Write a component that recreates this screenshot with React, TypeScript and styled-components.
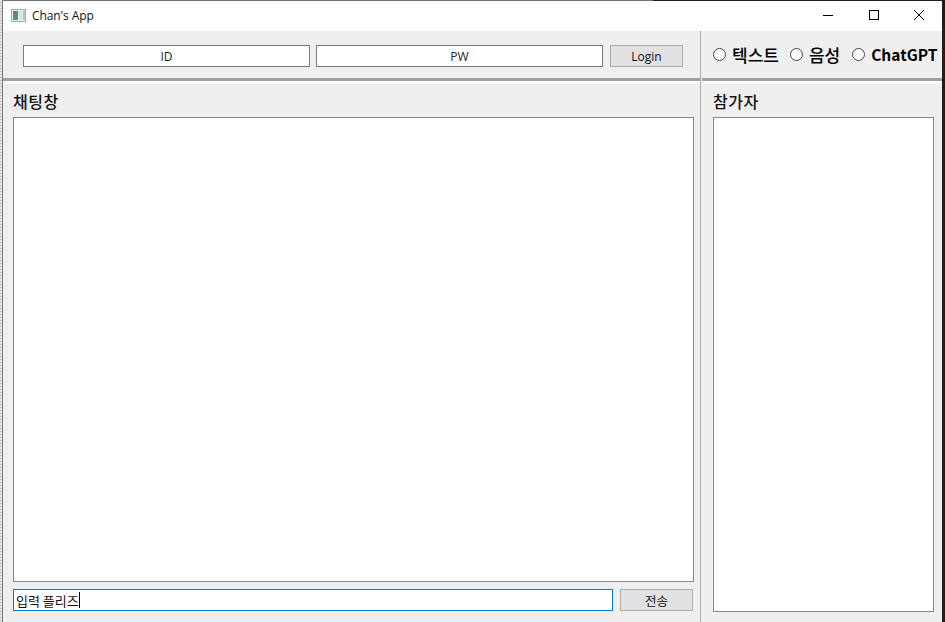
import React from "react";
import styled, { createGlobalStyle } from "styled-components";

const Global = createGlobalStyle`
  html, body { margin: 0; padding: 0; width: 945px; height: 622px; overflow: hidden; background: #f0f0f0; }
  * { box-sizing: border-box; }
`;
const FONT = `"Open Sans", "Liberation Sans", "Noto Sans CJK KR", sans-serif`;
const KFONT = `"Noto Sans CJK KR", "Liberation Sans", sans-serif`;

const Desk = styled.div`
  width: 945px; height: 622px; display: flex; overflow: hidden;
`;
const LeftEdge = styled.div`
  width: 2px; flex: none;
  background: repeating-linear-gradient(180deg, #e6e6e6 0 2px, #c4c4c4 2px 3px);
`;
const RightEdge = styled.div`
  flex: 1; background: #1e1e1e;
`;
const Win = styled.div`
  width: 940px; height: 622px; background: #efefef; display: flex; flex-direction: column; flex: none;
  border-left: 1px solid #777; font-family: ${FONT}; color: #000;
`;
const TopEdge = styled.div`
  height: 1px; flex: none; background: linear-gradient(90deg, #707070 0 650px, #1e1e1e 650px);
`;
const TitleBar = styled.div`
  height: 30px; padding-bottom: 2px; background: #fff; display: flex; align-items: center; flex: none;
`;
const AppIcon = styled.svg`
  width: 15px; height: 13px; margin-left: 8px; margin-right: 6px; flex: none;
`;
const TitleText = styled.span`
  font-size: 12px; color: #111; letter-spacing: -0.1px;
`;
const Controls = styled.div`
  margin-left: auto; display: flex;
`;
const Ctl = styled.div<{ $w: number }>`
  width: ${(p) => p.$w}px; height: 28px; display: flex; align-items: center; justify-content: center;
`;
const Body = styled.div`
  flex: 1; display: flex; min-height: 0;
`;
const LeftCol = styled.div`
  width: 697px; display: flex; flex-direction: column; flex: none;
`;
const RightCol = styled.div`
  flex: 1; display: flex; flex-direction: column; border-left: 1px solid #a9a9a9;
`;
const Toolbar = styled.div`
  height: 50px; display: flex; align-items: flex-start; border-bottom: 3px solid #a0a0a0; flex: none;
`;
const LeftToolbar = styled(Toolbar)`
  padding: 14px 0 0 20px; gap: 6px;
`;
const RightToolbar = styled(Toolbar)`
  margin-left: 1px; padding: 12px 0 0 11px; gap: 11px;
`;
const LineField = styled.div`
  width: 287px; height: 22px; border: 1px solid #7a7a7a; background: #fff; font-size: 12px; padding-top: 1px;
  display: flex; align-items: center; justify-content: center; color: #222;
`;
const Btn = styled.div`
  width: 73px; height: 22px; border: 1px solid #adadad; background: #e1e1e1; font-size: 12px; padding-top: 1px;
  display: flex; align-items: center; justify-content: center; color: #111;
  flex: none;
`;
const LoginBtn = styled(Btn)`
  margin-left: 1px;
`;
const Radio = styled.div`
  display: flex; align-items: center; gap: 6px; height: 22px; font-size: 17px; font-weight: 500;
  font-family: ${KFONT}; white-space: nowrap;
`;
const LastRadio = styled(Radio)`
  margin-left: 1px;
`;
const LatinLabel = styled.span`
  font-size: 15.5px; font-weight: 700;
`;
const Circle = styled.span`
  width: 13px; height: 13px; border-radius: 50%; border: 1px solid #444; background: #fff; flex: none;
`;
const Panel = styled.div`
  flex: 1; display: flex; flex-direction: column; min-height: 0; border-top: 3px solid #f9f9f9;
`;
const LeftPanel = styled(Panel)`
  padding: 6px 0 0 10px;
`;
const RightPanel = styled(Panel)`
  margin-left: 1px; padding: 6px 0 10px 11px;
`;
const Heading = styled.div`
  font-size: 16px; font-weight: 500; font-family: ${KFONT}; height: 27px; line-height: 22px; color: #111; flex: none;
  letter-spacing: 0.5px;
`;
const ChatBox = styled.div`
  width: 681px; height: 465px; background: #fff; border: 1px solid #828790; flex: none;
`;
const InputRow = styled.div`
  display: flex; margin-top: 7px; gap: 7px;
`;
const MsgInput = styled.div`
  width: 600px; height: 22px; border: 1px solid #0078d7; background: #fff; font-size: 13px;
  font-family: ${KFONT}; display: flex; align-items: center; padding-left: 2px; color: #111;
`;
const Caret = styled.span`
  width: 1px; height: 16px; background: #000;
`;
const SendBtn = styled(Btn)`
  font-family: ${KFONT}; font-size: 12.5px;
`;
const PeopleBox = styled.div`
  width: 221px; flex: 1; background: #fff; border: 1px solid #828790;
`;

export default function App() {
  return (
    <>
      <Global />
      <Desk>
        <LeftEdge />
        <Win>
          <TopEdge />
          <TitleBar>
            <AppIcon viewBox="0 0 15 13">
              <defs>
                <linearGradient id="pane" x1="0" y1="0" x2="0" y2="1">
                  <stop offset="0" stopColor="#5b7fa0" />
                  <stop offset="1" stopColor="#4f9a80" />
                </linearGradient>
              </defs>
              <rect x="0.5" y="0.5" width="14" height="12" fill="#e8ecec" stroke="#a8a8a8" />
              <rect x="2" y="2" width="5" height="9" fill="url(#pane)" />
              <rect x="8" y="2" width="3" height="9" fill="#d3e6df" />
              <rect x="12" y="2" width="2" height="9" fill="#b4c2c2" />
            </AppIcon>
            <TitleText>Chan's App</TitleText>
            <Controls>
              <Ctl $w={46}>
                <svg width="10" height="10" viewBox="0 0 10 10"><path d="M0 5.5H10" stroke="#000" strokeWidth="1" /></svg>
              </Ctl>
              <Ctl $w={45}>
                <svg width="10" height="10" viewBox="0 0 10 10"><rect x="0.5" y="0.5" width="9" height="9" fill="none" stroke="#000" /></svg>
              </Ctl>
              <Ctl $w={46}>
                <svg width="10" height="10" viewBox="0 0 10 10"><path d="M0 0L10 10M10 0L0 10" stroke="#000" strokeWidth="1" /></svg>
              </Ctl>
            </Controls>
          </TitleBar>
          <Body>
            <LeftCol>
              <LeftToolbar>
                <LineField>ID</LineField>
                <LineField>PW</LineField>
                <LoginBtn>Login</LoginBtn>
              </LeftToolbar>
              <LeftPanel>
                <Heading>채팅창</Heading>
                <ChatBox />
                <InputRow>
                  <MsgInput>입력 플리즈<Caret /></MsgInput>
                  <SendBtn>전송</SendBtn>
                </InputRow>
              </LeftPanel>
            </LeftCol>
            <RightCol>
              <RightToolbar>
                <Radio><Circle />텍스트</Radio>
                <Radio><Circle />음성</Radio>
                <LastRadio><Circle /><LatinLabel>ChatGPT</LatinLabel></LastRadio>
              </RightToolbar>
              <RightPanel>
                <Heading>참가자</Heading>
                <PeopleBox />
              </RightPanel>
            </RightCol>
          </Body>
        </Win>
        <RightEdge />
      </Desk>
    </>
  );
}
